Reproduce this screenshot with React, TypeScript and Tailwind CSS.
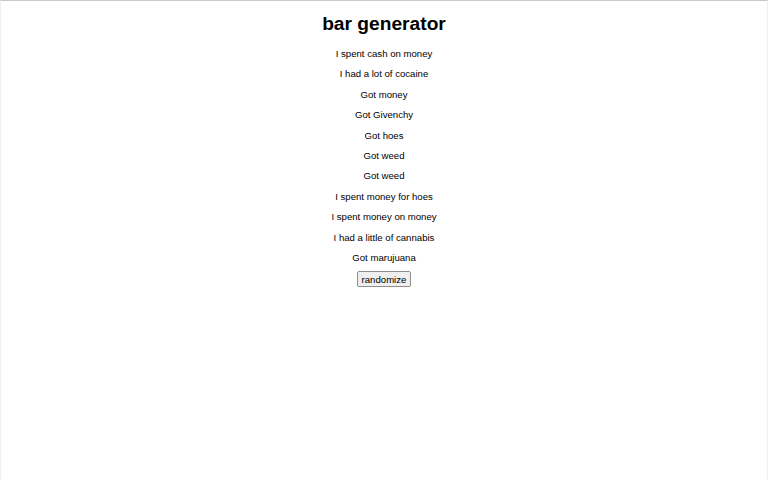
import * as React from 'react';

const bars = [
    'I spent cash on money',
    'I had a lot of cocaine',
    'Got money',
    'Got Givenchy',
    'Got hoes',
    'Got weed',
    'Got weed',
    'I spent money for hoes',
    'I spent money on money',
    'I had a little of cannabis',
    'Got marujuana',
];

export default function App() {
    return (
        <div className="w-[768px] h-[480px] overflow-hidden bg-white border-t border-t-[#c8c8c8] border-x border-x-[#f0f0f0] text-black" style={{ fontFamily: '"Liberation Sans", Arial, sans-serif' }}>
            <div className="flex flex-col items-center text-center">
                <h1 className="mt-[12px] mb-[13px] text-[19.2px] leading-[22px] font-bold">bar generator</h1>
                <div className="flex flex-col items-center gap-[9.4px]">
                    {bars.map((bar, i) => (
                        <p key={i} className="text-[9.6px] leading-[11px]">{bar}</p>
                    ))}
                    <button className="-mt-[1px] h-[16px] px-[4px] text-[9.6px] leading-[11px] bg-[#efefef] border border-[#8f8f8f] rounded-[2px]">
                        randomize
                    </button>
                </div>
            </div>
        </div>
    );
}
